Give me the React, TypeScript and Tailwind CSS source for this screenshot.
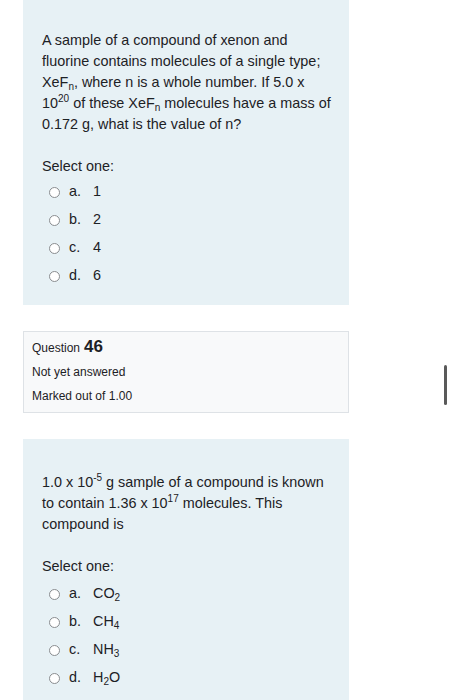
import React from "react";

const font = { fontFamily: '"Liberation Sans", Arial, sans-serif' };

type Opt = { letter: string; value: React.ReactNode };

const Options = ({ options }: { options: Opt[] }) => (
  <div className="flex flex-col">
    {options.map((o) => (
      <div key={o.letter} className="flex items-center h-[28px]">
        <span className="ml-[7px] w-[11px] h-[11px] rounded-full border border-[#8a8d90] bg-white" />
        <span className="ml-[9px] w-[24px]">{o.letter}</span>
        <span>{o.value}</span>
      </div>
    ))}
  </div>
);

const Sub = ({ children }: { children: React.ReactNode }) => (
  <span className="text-[10px] leading-none relative top-[3px]">{children}</span>
);
const Sup = ({ children }: { children: React.ReactNode }) => (
  <span className="text-[10px] leading-none relative -top-[6px]">{children}</span>
);

export default function App() {
  return (
    <div className="relative w-[451px] h-[700px] bg-white text-[#1d2125] overflow-hidden" style={font}>
      <div className="ml-[23px] w-[326px] flex flex-col">
        {/* pregunta 45 */}
        <div className="bg-[#e7f1f5] pl-[19px] pr-[17px] pt-[30px] pb-[15px] text-[14.4px]">
          <p className="leading-[21px]">
            A sample of a compound of xenon and fluorine contains molecules of a single type; XeF<Sub>n</Sub>, where n is a
            whole number. If 5.0 x 10<Sup>20</Sup> of these XeF<Sub>n</Sub> molecules have a mass of 0.172 g, what is the
            value of n?
          </p>
          <p className="leading-[21px] mt-[21px] mb-[1px]">Select one:</p>
          <Options
            options={[
              { letter: "a.", value: "1" },
              { letter: "b.", value: "2" },
              { letter: "c.", value: "4" },
              { letter: "d.", value: "6" },
            ]}
          />
        </div>

        {/* info */}
        <div className="mt-[26px] h-[82px] bg-[#f8f9fa] border border-[#dee2e6] px-[8px] pt-[3px] text-[12px]">
          <div className="flex items-baseline gap-[4px] leading-[24px]">
            <span>Question</span>
            <span className="text-[17px] font-bold">46</span>
          </div>
          <div className="leading-[24px]">Not yet answered</div>
          <div className="leading-[24px]">Marked out of 1.00</div>
        </div>

        {/* pregunta 46 */}
        <div className="mt-[26px] bg-[#e7f1f5] pl-[19px] pr-[22px] pt-[33px] pb-[20px] text-[14.4px] h-[300px]">
          <p className="leading-[21px]">
            1.0 x 10<Sup>-5</Sup> g sample of a compound is known to contain 1.36 x 10<Sup>17</Sup> molecules. This
            compound is
          </p>
          <p className="leading-[21px] mt-[21px] mb-[3px]">Select one:</p>
          <Options
            options={[
              { letter: "a.", value: <>CO<Sub>2</Sub></> },
              { letter: "b.", value: <>CH<Sub>4</Sub></> },
              { letter: "c.", value: <>NH<Sub>3</Sub></> },
              { letter: "d.", value: <>H<Sub>2</Sub>O</> },
            ]}
          />
        </div>
      </div>

      <div className="absolute left-[444px] top-[365px] w-[3px] h-[40px] rounded-full bg-[#5a5a5a]" />
    </div>
  );
}
